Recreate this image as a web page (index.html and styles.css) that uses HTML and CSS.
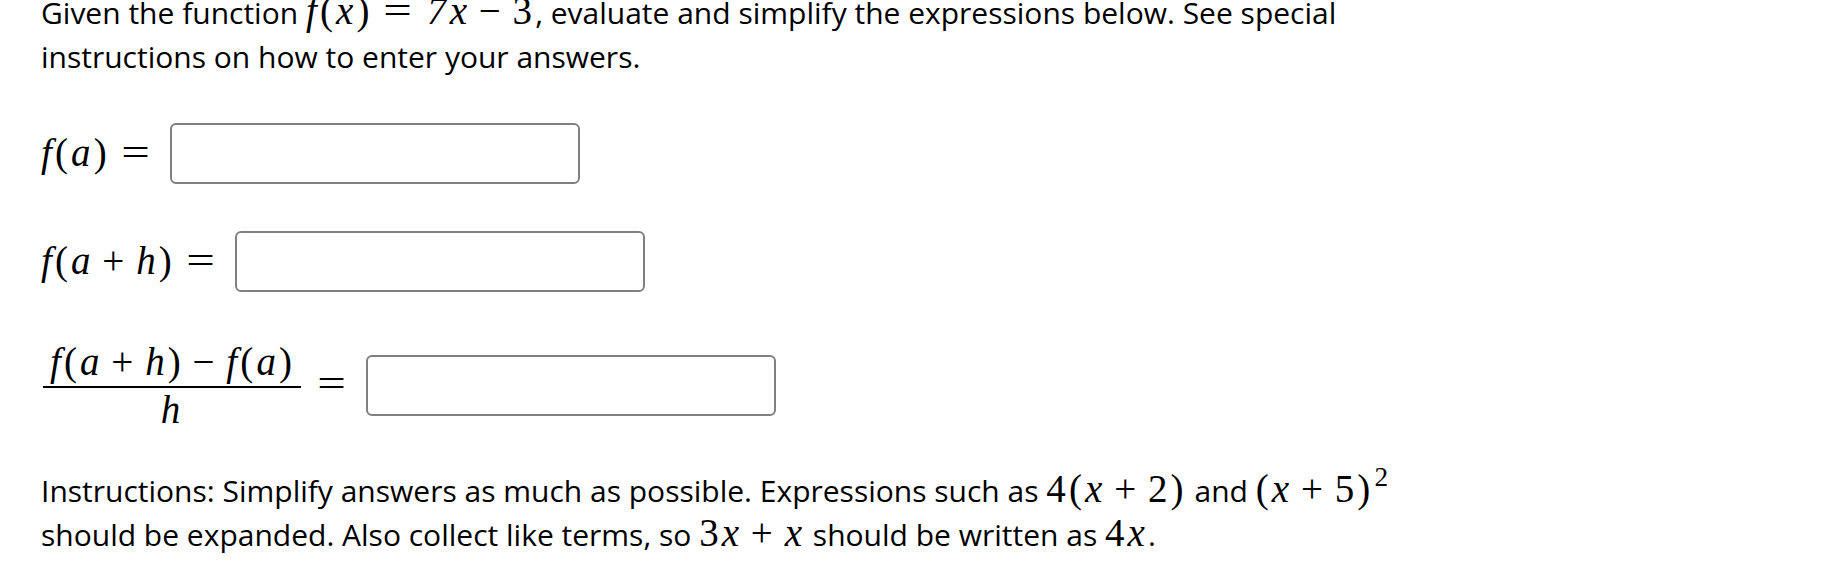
FILE: index.html
```html
<!DOCTYPE html>
<html>
<head>
<meta charset="utf-8">
<link rel="stylesheet" href="styles.css">
</head>
<body>
<div class="page">
  <p class="text">Given the function <span class="m"><i>f</i>(<i>x</i>)<span class="rel">=</span><i>7x</i><span class="bin">−</span>3</span>, evaluate and simplify the expressions below. See special instructions on how to enter your answers.</p>

  <div class="row r1">
    <span class="m label"><i>f</i>(<i>a</i>)<span class="rel">=</span></span>
    <input class="ans" type="text">
  </div>

  <div class="row r2">
    <span class="m label"><i>f</i>(<i>a</i><span class="bin">+</span><i>h</i>)<span class="rel">=</span></span>
    <input class="ans" type="text">
  </div>

  <div class="row r3">
    <span class="m frac">
      <span class="num"><i>f</i>(<i>a</i><span class="bin">+</span><i>h</i>)<span class="bin">−</span><i>f</i>(<i>a</i>)</span>
      <span class="den"><i>h</i></span>
    </span>
    <span class="m eq"><span class="rel">=</span></span>
    <input class="ans" type="text">
  </div>

  <p class="text instr">Instructions: Simplify answers as much as possible. Expressions such as <span class="m">4(<i>x</i><span class="bin">+</span>2)</span> and <span class="m">(<i>x</i><span class="bin">+</span>5)<sup>2</sup></span> should be expanded. Also collect like terms, so <span class="m">3<i>x</i><span class="bin">+</span><i>x</i></span> should be written as <span class="m">4<i>x</i></span>.</p>
</div>
</body>
</html>
```

FILE: styles.css
```css
html, body {
  margin: 0;
  padding: 0;
  background: #ffffff;
}

body {
  color: #000000;
  font-family: "Open Sans", "Noto Sans", sans-serif;
  font-size: 30px;
  overflow: hidden;
}

.page {
  width: 1400px;
  margin-top: -8.6px;
  padding-left: 41px;
}

.text {
  margin: 0;
  line-height: 44px;
}

.m {
  font-family: "Liberation Serif", "DejaVu Serif", serif;
  font-size: 1.3em;
  letter-spacing: 0.08em;
  white-space: nowrap;
}

.text .m {
  line-height: 1;
}

.m i {
  font-style: italic;
}

.rel {
  display: inline-block;
  margin: 0 calc(0.3em + 3px);
  transform: scaleX(1.3);
}

.bin {
  margin: 0 0.2222em;
}

.label .rel {
  margin-right: 0;
}

.row {
  display: flex;
  align-items: center;
  line-height: 1.2;
}

.r1 { margin-top: 43.5px; }
.r2 { margin-top: 47px; }
.r3 { margin-top: 50px; }

.ans {
  box-sizing: border-box;
  width: 410px;
  height: 61px;
  margin: 0 0 0 20px;
  padding: 0 10px;
  border: 2px solid #808080;
  border-radius: 6px;
  background: #ffffff;
  font-family: "Open Sans", sans-serif;
  font-size: 24px;
  outline: none;
}

.frac {
  display: inline-flex;
  flex-direction: column;
  align-items: center;
  margin-left: 2px;
}

.num {
  display: block;
  line-height: 1;
  padding: 0 6px 5px 7px;
  border-bottom: 2px solid #000000;
}

.den {
  display: block;
  line-height: 1;
  padding-top: 2px;
}

.eq {
  position: relative;
  top: -1px;
  margin-left: 5px;
}

.eq .rel {
  margin-right: 0;
}

.instr {
  margin-top: 40px;
}

sup {
  font-size: 0.7em;
  line-height: 0;
  vertical-align: 0.6em;
  margin-left: 1px;
}
```
